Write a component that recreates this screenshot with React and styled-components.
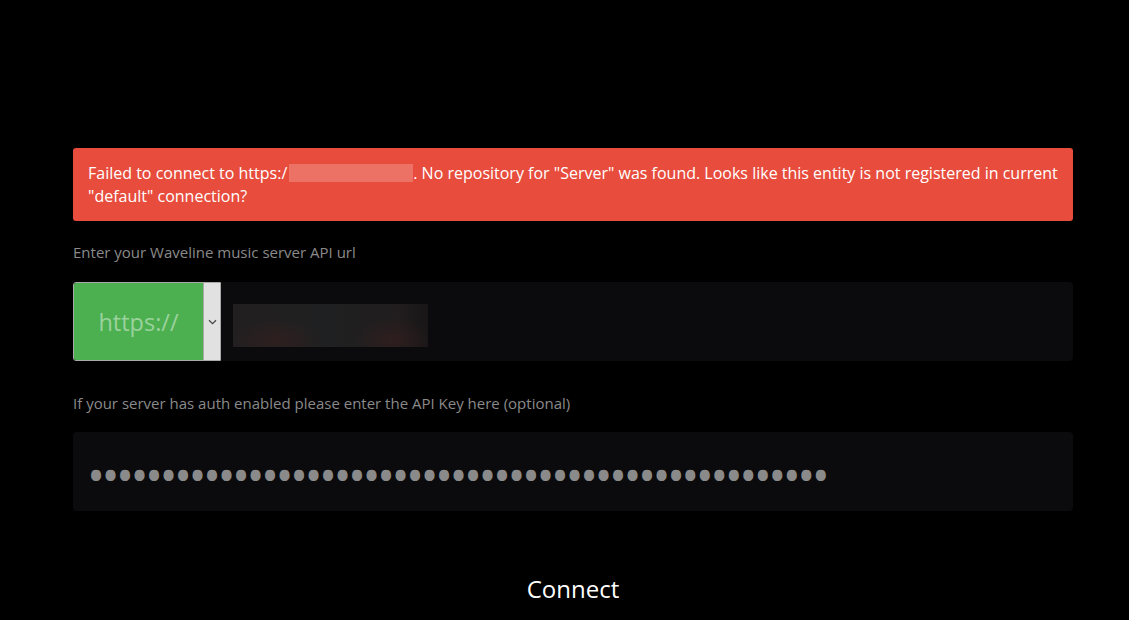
import React from "react";
import styled, { createGlobalStyle } from "styled-components";

const Global = createGlobalStyle`
  html, body { margin: 0; padding: 0; background: #000; }
  body { font-family: "Open Sans", "Noto Sans", sans-serif; overflow: hidden; }
  * { box-sizing: border-box; }
`;

const Page = styled.div`
  min-height: 620px;
  padding: 148px 56px 0 73px;
`;

const Container = styled.div`
  width: 1000px;
  display: flex;
  flex-direction: column;
`;

const ErrorBox = styled.div`
  background: #e74c3c;
  color: #fff;
  border-radius: 3px;
  padding: 14px 15px;
  font-size: 16px;
  line-height: 23px;
  height: 73px;
`;

const Redacted = styled.span`
  display: inline-block;
  width: 124px;
  height: 18px;
  margin-left: 2px;
  vertical-align: -3px;
  background: #ec7266;
`;

const Label = styled.div`
  color: #8a8a8a;
  font-size: 15px;
  line-height: 20px;
  margin-top: ${(p) => p.$top}px;
  margin-bottom: ${(p) => p.$bottom}px;
`;

const InputRow = styled.div`
  display: flex;
  height: 79px;
  background: #0b0b0d;
  border-radius: 4px;
`;

const Select = styled.div`
  display: flex;
  width: 148px;
  height: 79px;
  border: 1px solid #a9a9a9;
  border-radius: 3px 0 0 3px;
  overflow: hidden;
  flex-shrink: 0;
`;

const SelectValue = styled.div`
  flex: 1;
  background: #4caf50;
  color: rgba(255, 255, 255, 0.45);
  font-size: 23.5px;
  display: flex;
  align-items: center;
  justify-content: center;
  padding-top: 1px;
`;

const SelectArrow = styled.div`
  width: 17px;
  background: #e1e1e1;
  border-left: 1px solid #a9a9a9;
  display: flex;
  align-items: center;
  justify-content: center;
`;

const UrlField = styled.div`
  flex: 1;
  display: flex;
  align-items: flex-start;
  padding: 22px 0 0 12px;
`;

const Blur = styled.div`
  width: 195px;
  height: 43px;
  background:
    radial-gradient(ellipse 45px 22px at 45px 36px, rgba(60, 30, 30, 0.5), transparent),
    radial-gradient(ellipse 40px 22px at 160px 36px, rgba(60, 30, 30, 0.5), transparent),
    linear-gradient(90deg, #221f20, #1f2021 50%, #211d1e 85%, #181617);
`;

const KeyInput = styled.input`
  width: 100%;
  height: 79px;
  background: #0b0b0d;
  border: none;
  outline: none;
  border-radius: 4px;
  padding: 5px 14px 0;
  color: #8a8a8a;
  font-family: "Open Sans", sans-serif;
  font-size: 48px;
  letter-spacing: -3.55px;
`;

const ConnectButton = styled.button`
  align-self: center;
  margin-top: 61px;
  background: none;
  border: none;
  color: #fff;
  font-family: "Open Sans", sans-serif;
  font-size: 24px;
  line-height: 33px;
  padding: 0;
  cursor: pointer;
`;

export default function App() {
  return (
    <>
      <Global />
      <Page>
        <Container>
          <ErrorBox>
            Failed to connect to https:/<Redacted />. No repository for "Server" was
            found. Looks like this entity is not registered in current "default"
            connection?
          </ErrorBox>
          <Label $top={21} $bottom={20}>Enter your Waveline music server API url</Label>
          <InputRow>
            <Select>
              <SelectValue>https://</SelectValue>
              <SelectArrow>
                <svg width="9" height="6" viewBox="0 0 9 6">
                  <path d="M1 1.2 L4.5 4.6 L8 1.2" fill="none" stroke="#444" strokeWidth="1.2" />
                </svg>
              </SelectArrow>
            </Select>
            <UrlField>
              <Blur />
            </UrlField>
          </InputRow>
          <Label $top={32} $bottom={19}>If your server has auth enabled please enter the API Key here (optional)</Label>
          <KeyInput type="password" defaultValue={"x".repeat(51)} readOnly />
          <ConnectButton>Connect</ConnectButton>
        </Container>
      </Page>
    </>
  );
}
